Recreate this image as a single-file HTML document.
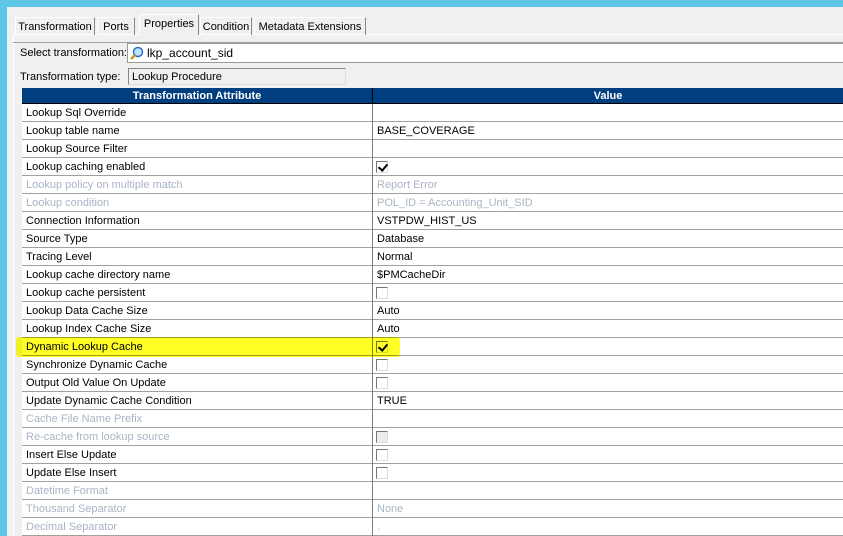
<!DOCTYPE html>
<html><head><meta charset="utf-8"><style>
*{margin:0;padding:0;box-sizing:border-box}
body{width:843px;height:536px;overflow:hidden;background:#5ec7e8;font-family:"Liberation Sans",sans-serif;font-size:11px;color:#000;position:relative}
.panel{position:absolute;left:7px;top:7px;right:0;bottom:0;background:#f0f0f0}
.a{position:absolute;white-space:nowrap}
.tab{position:absolute;top:17px;height:18px;border-left:1px solid #fff;border-right:1px solid #888;border-top:1px solid #fff;line-height:18px;text-align:center;font-size:11px;white-space:nowrap}
.row{position:absolute;left:22px;right:0;height:18px;border-bottom:1px solid #a0a0a0;background:#fff}
.row .k{position:absolute;left:4px;top:3px;white-space:nowrap}
.row .v{position:absolute;left:355px;top:3px;white-space:nowrap}
.row .d{position:absolute;left:350px;top:0;bottom:-1px;width:1px;background:#808080}
.g{color:#a9b4c6}
.cb{position:absolute;left:354px;top:3px;width:12px;height:12px;border-top:1px solid #777;border-left:1px solid #777;border-right:1px solid #ddd;border-bottom:1px solid #ddd;background:#fff}
.cb.dis{background:#ececec}
.cb.on::after{content:"";position:absolute;left:3px;top:0px;width:4px;height:7px;border-right:2px solid #000;border-bottom:2px solid #000;transform:rotate(40deg)}
</style></head><body>
<div class="panel"></div>
<div class="a" style="left:13px;top:34px;right:0;height:1px;background:#fff"></div>
<div class="a" style="left:13px;top:35px;width:1px;bottom:0;background:#fff"></div>
<div class="a" style="left:13px;top:42px;right:0;height:1px;background:#a0a0a0"></div>
<div class="tab" style="left:15px;width:80px">Transformation</div>
<div class="tab" style="left:97px;width:38px">Ports</div>
<div class="tab" style="left:139px;top:14px;height:21px;width:60px;background:#f0f0f0;border-bottom:none">Properties</div>
<div class="tab" style="left:200px;width:52px">Condition</div>
<div class="tab" style="left:254px;width:112px">Metadata Extensions</div>
<div class="a" style="left:20px;top:47px">Select transformation:</div>
<div class="a" style="left:127px;top:43px;right:0;height:20px;background:#fff;border:1px solid #999;border-right:none"></div>
<svg class="a" style="left:130px;top:46px" width="14" height="14" viewBox="0 0 14 14"><circle cx="8" cy="6" r="4.5" fill="#bfe3ff" stroke="#2a6fc2" stroke-width="1.5"/><line x1="5" y1="9" x2="1" y2="13" stroke="#c99a1c" stroke-width="2.5"/></svg>
<div class="a" style="left:147px;top:46px;font-size:12px">lkp_account_sid</div>
<div class="a" style="left:20px;top:71px">Transformation type:</div>
<div class="a" style="left:128px;top:68px;width:218px;height:17px;border:1px solid #888;border-right-color:#ddd;border-bottom-color:#ddd;padding:2px 3px;background:#f0f0f0">Lookup Procedure</div>
<div class="a" style="left:22px;top:88px;right:0;height:16px;background:#003f7f;border-bottom:1px solid #000;color:#fff;font-weight:bold">
<div class="a" style="left:0;width:350px;text-align:center;top:2px">Transformation Attribute</div>
<div class="a" style="left:350px;width:1px;top:0;bottom:0;background:#000"></div>
<div class="a" style="left:351px;right:0;text-align:center;top:2px">Value</div>
</div>
<div class="row" style="top:104px"><div class="d"></div><span class="k">Lookup Sql Override</span></div>
<div class="row" style="top:122px"><div class="d"></div><span class="k">Lookup table name</span><span class="v">BASE_COVERAGE</span></div>
<div class="row" style="top:140px"><div class="d"></div><span class="k">Lookup Source Filter</span></div>
<div class="row" style="top:158px"><div class="d"></div><span class="k">Lookup caching enabled</span><div class="cb on"></div></div>
<div class="row" style="top:176px"><div class="d"></div><span class="k g">Lookup policy on multiple match</span><span class="v g">Report Error</span></div>
<div class="row" style="top:194px"><div class="d"></div><span class="k g">Lookup condition</span><span class="v g">POL_ID = Accounting_Unit_SID</span></div>
<div class="row" style="top:212px"><div class="d"></div><span class="k">Connection Information</span><span class="v">VSTPDW_HIST_US</span></div>
<div class="row" style="top:230px"><div class="d"></div><span class="k">Source Type</span><span class="v">Database</span></div>
<div class="row" style="top:248px"><div class="d"></div><span class="k">Tracing Level</span><span class="v">Normal</span></div>
<div class="row" style="top:266px"><div class="d"></div><span class="k">Lookup cache directory name</span><span class="v">$PMCacheDir</span></div>
<div class="row" style="top:284px"><div class="d"></div><span class="k">Lookup cache persistent</span><div class="cb"></div></div>
<div class="row" style="top:302px"><div class="d"></div><span class="k">Lookup Data Cache Size</span><span class="v">Auto</span></div>
<div class="row" style="top:320px"><div class="d"></div><span class="k">Lookup Index Cache Size</span><span class="v">Auto</span></div>
<div class="row" style="top:338px"><div class="d"></div><span class="k">Dynamic Lookup Cache</span><div class="cb on"></div></div>
<div class="row" style="top:356px"><div class="d"></div><span class="k">Synchronize Dynamic Cache</span><div class="cb"></div></div>
<div class="row" style="top:374px"><div class="d"></div><span class="k">Output Old Value On Update</span><div class="cb"></div></div>
<div class="row" style="top:392px"><div class="d"></div><span class="k">Update Dynamic Cache Condition</span><span class="v">TRUE</span></div>
<div class="row" style="top:410px"><div class="d"></div><span class="k g">Cache File Name Prefix</span></div>
<div class="row" style="top:428px"><div class="d"></div><span class="k g">Re-cache from lookup source</span><div class="cb dis"></div></div>
<div class="row" style="top:446px"><div class="d"></div><span class="k">Insert Else Update</span><div class="cb"></div></div>
<div class="row" style="top:464px"><div class="d"></div><span class="k">Update Else Insert</span><div class="cb"></div></div>
<div class="row" style="top:482px"><div class="d"></div><span class="k g">Datetime Format</span></div>
<div class="row" style="top:500px"><div class="d"></div><span class="k g">Thousand Separator</span><span class="v g">None</span></div>
<div class="row" style="top:518px"><div class="d"></div><span class="k g">Decimal Separator</span><span class="v g">.</span></div>
<div class="a" style="left:16px;top:337px;width:384px;height:20px;background:rgba(255,255,0,0.85);border-radius:3px;mix-blend-mode:multiply"></div>
</body></html>
